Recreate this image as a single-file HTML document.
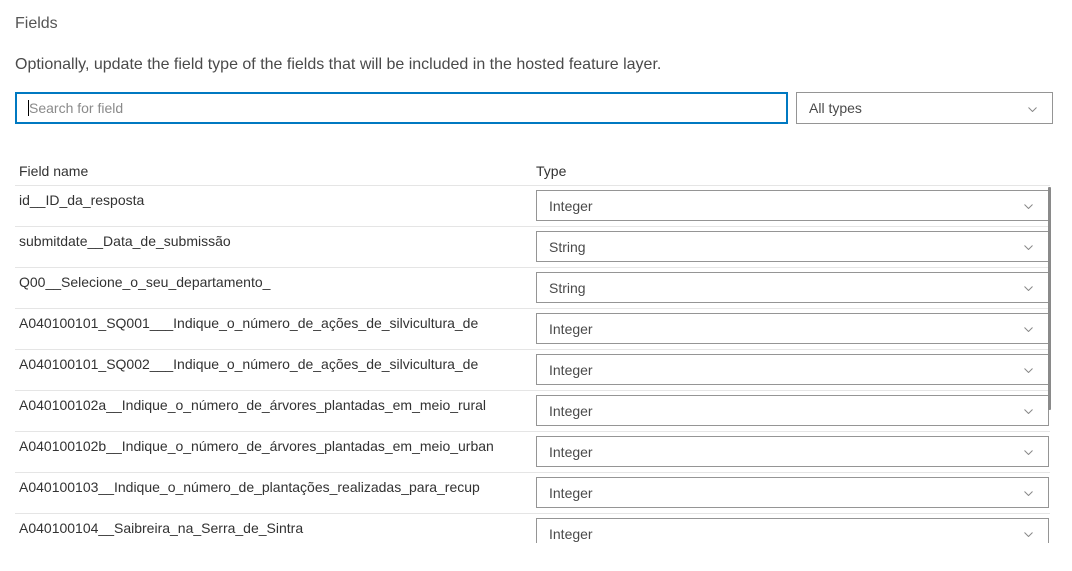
<!DOCTYPE html>
<html><head><meta charset="utf-8"><style>
*{box-sizing:border-box;margin:0;padding:0}
body{width:1072px;height:571px;background:#fff;font-family:"Liberation Sans",sans-serif;color:#323232;position:relative;overflow:hidden}
.a{position:absolute;white-space:nowrap}
.sel{position:absolute;left:536px;width:513px;height:31px;border:1px solid #959595;background:#fff;font-size:14px;line-height:31px;padding-left:12px;color:#4a4a4a}
.chev{position:absolute;right:15px;top:13px;width:9px;height:5px}
.div{position:absolute;left:15px;width:1035px;height:1px;background:#e5e5e5}
.fn{position:absolute;left:19px;font-size:14px;line-height:18px;white-space:nowrap;color:#323232}
</style></head><body>
<div class="a" style="left:15px;top:15px;font-size:16px;color:#555">Fields</div>
<div class="a" style="left:15px;top:56px;font-size:16px;color:#4a4a4a">Optionally, update the field type of the fields that will be included in the hosted feature layer.</div>
<div class="a" style="left:15px;top:92px;width:773px;height:32px;border:2px solid #0079c1;font-size:14px;line-height:28px;padding-left:11px;color:#8a8a8a"><span style="border-left:1px solid #000">Search for field</span></div>
<div class="a" style="left:796px;top:92px;width:257px;height:32px;border:1px solid #959595;font-size:14px;line-height:31px;padding-left:12px;color:#4a4a4a">All types<svg class="chev" style="top:14px" viewBox="0 0 9 5"><path d="M0.5 0.5L4.5 4.5L8.5 0.5" fill="none" stroke="#888" stroke-width="1"/></svg></div>
<div class="a" style="left:19px;top:163px;font-size:14px">Field name</div>
<div class="a" style="left:536px;top:163px;font-size:14px">Type</div>
<div style="position:absolute;left:0;top:0;width:1072px;height:543px;overflow:hidden">
<div class="div" style="top:185px"></div><div class="fn" style="top:191px">id__ID_da_resposta</div><div class="sel" style="top:190px">Integer<svg class="chev" viewBox="0 0 9 5"><path d="M0.5 0.5L4.5 4.5L8.5 0.5" fill="none" stroke="#888"/></svg></div>
<div class="div" style="top:226px"></div><div class="fn" style="top:232px">submitdate__Data_de_submissão</div><div class="sel" style="top:231px">String<svg class="chev" viewBox="0 0 9 5"><path d="M0.5 0.5L4.5 4.5L8.5 0.5" fill="none" stroke="#888"/></svg></div>
<div class="div" style="top:267px"></div><div class="fn" style="top:273px">Q00__Selecione_o_seu_departamento_</div><div class="sel" style="top:272px">String<svg class="chev" viewBox="0 0 9 5"><path d="M0.5 0.5L4.5 4.5L8.5 0.5" fill="none" stroke="#888"/></svg></div>
<div class="div" style="top:308px"></div><div class="fn" style="top:314px">A040100101_SQ001___Indique_o_número_de_ações_de_silvicultura_de</div><div class="sel" style="top:313px">Integer<svg class="chev" viewBox="0 0 9 5"><path d="M0.5 0.5L4.5 4.5L8.5 0.5" fill="none" stroke="#888"/></svg></div>
<div class="div" style="top:349px"></div><div class="fn" style="top:355px">A040100101_SQ002___Indique_o_número_de_ações_de_silvicultura_de</div><div class="sel" style="top:354px">Integer<svg class="chev" viewBox="0 0 9 5"><path d="M0.5 0.5L4.5 4.5L8.5 0.5" fill="none" stroke="#888"/></svg></div>
<div class="div" style="top:390px"></div><div class="fn" style="top:396px">A040100102a__Indique_o_número_de_árvores_plantadas_em_meio_rural</div><div class="sel" style="top:395px">Integer<svg class="chev" viewBox="0 0 9 5"><path d="M0.5 0.5L4.5 4.5L8.5 0.5" fill="none" stroke="#888"/></svg></div>
<div class="div" style="top:431px"></div><div class="fn" style="top:437px">A040100102b__Indique_o_número_de_árvores_plantadas_em_meio_urban</div><div class="sel" style="top:436px">Integer<svg class="chev" viewBox="0 0 9 5"><path d="M0.5 0.5L4.5 4.5L8.5 0.5" fill="none" stroke="#888"/></svg></div>
<div class="div" style="top:472px"></div><div class="fn" style="top:478px">A040100103__Indique_o_número_de_plantações_realizadas_para_recup</div><div class="sel" style="top:477px">Integer<svg class="chev" viewBox="0 0 9 5"><path d="M0.5 0.5L4.5 4.5L8.5 0.5" fill="none" stroke="#888"/></svg></div>
<div class="div" style="top:513px"></div><div class="fn" style="top:519px">A040100104__Saibreira_na_Serra_de_Sintra</div><div class="sel" style="top:518px">Integer<svg class="chev" viewBox="0 0 9 5"><path d="M0.5 0.5L4.5 4.5L8.5 0.5" fill="none" stroke="#888"/></svg></div>
</div>
<div class="a" style="left:1048px;top:187px;width:3px;height:223px;background:#8a8a8a;border-radius:1px"></div>
</body></html>
